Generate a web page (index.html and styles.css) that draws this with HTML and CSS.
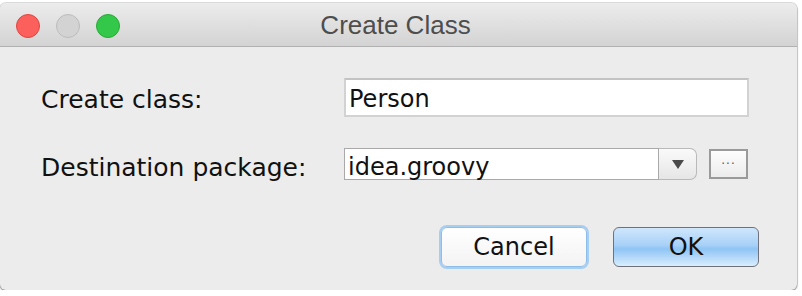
FILE: index.html
```html
<!doctype html>
<html lang="en">
  <head>
    <meta charset="UTF-8" />
    <title>Create Class</title>
    <link rel="stylesheet" href="styles.css">
  </head>
  <body>
    <div class="window">
      <div class="titlebar">
        <div class="lights">
          <span class="light close"></span>
          <span class="light minimize"></span>
          <span class="light zoom"></span>
        </div>
        <div class="title">Create Class</div>
      </div>
      <div class="dialog">
        <div class="form">
          <label class="label">Create class:</label>
          <div class="field">Person</div>
          <label class="label second">Destination package:</label>
          <div class="package">
            <div class="combo">
              <div class="combo-text">idea.groovy</div>
              <div class="combo-arrow">
                <svg width="12" height="9" viewBox="0 0 12 9"><path d="M0 0 L12 0 L6 9 Z" fill="#4a4a4a"/></svg>
              </div>
            </div>
            <div class="browse">&middot;&middot;&middot;</div>
          </div>
        </div>
        <div class="buttons">
          <button class="btn cancel">Cancel</button>
          <button class="btn ok">OK</button>
        </div>
      </div>
    </div>
  </body>
</html>
```

FILE: styles.css
```css
* {
  box-sizing: border-box;
}
body {
  margin: 0;
  background: #ffffff;
  font-family: "DejaVu Sans", "Liberation Sans", sans-serif;
  color: #111;
}
.window {
  width: 797px;
  height: 287px;
  margin-top: 3px;
  border-radius: 6px;
  background: #ececec;
  overflow: hidden;
  box-shadow: 0 1px 2px rgba(0, 0, 0, 0.45), 0 0 0 1px rgba(0, 0, 0, 0.12);
  display: flex;
  flex-direction: column;
}
.titlebar {
  height: 44px;
  flex: none;
  position: relative;
  display: flex;
  align-items: center;
  justify-content: center;
  background: linear-gradient(#ececec, #d3d3d3);
  border-bottom: 1px solid #b1b1b1;
}
.lights {
  position: absolute;
  left: 16px;
  top: 11px;
  display: flex;
  gap: 16px;
}
.light {
  width: 24px;
  height: 24px;
  border-radius: 50%;
}
.close {
  background: #fc605c;
  border: 1px solid #e0443e;
}
.minimize {
  background: #d3d3d3;
  border: 1px solid #bcbcbc;
}
.zoom {
  background: #34c84a;
  border: 1px solid #27aa35;
}
.title {
  font-family: "Liberation Sans", Arial, sans-serif;
  font-size: 26px;
  color: #4d4d4d;
  margin: 2px 0 0 -6px;
}
.dialog {
  flex: 1;
  display: flex;
  flex-direction: column;
  padding: 31px 38px 0 41px;
}
.form {
  display: grid;
  grid-template-columns: 303px 405px;
  grid-template-rows: 39px 32px;
  row-gap: 31px;
  align-items: center;
}
.label {
  font-size: 25px;
  line-height: 30px;
  padding-top: 5px;
}
.label.second {
  padding-top: 8px;
}
.field {
  height: 39px;
  background: #fff;
  border: 2px solid #d2d2d2;
  border-top-color: #c3c3c3;
  font-size: 24px;
  line-height: 35px;
  padding: 2px 0 0 3px;
}
.package {
  display: flex;
  align-items: center;
  gap: 12px;
}
.combo {
  display: flex;
  height: 32px;
}
.combo-text {
  width: 315px;
  background: #fff;
  border: 1px solid #a9a9a9;
  font-size: 24px;
  line-height: 30px;
  padding: 3px 0 0 3px;
}
.combo-arrow {
  width: 38px;
  border: 1px solid #b9b9b9;
  border-left: none;
  border-radius: 0 7px 7px 0;
  background: linear-gradient(#fafafa, #e6e6e6);
  display: flex;
  align-items: center;
  justify-content: center;
}
.browse {
  width: 39px;
  height: 30px;
  border: 2px solid #9a9a9a;
  background: linear-gradient(#fdfdfd, #ececec);
  font-size: 12px;
  color: #555;
  display: flex;
  align-items: center;
  justify-content: center;
  letter-spacing: 1px;
}
.buttons {
  display: flex;
  justify-content: flex-end;
  gap: 26px;
  margin-top: 47px;
}
.btn {
  width: 146px;
  height: 40px;
  border-radius: 6px;
  font-family: "DejaVu Sans", sans-serif;
  font-size: 24px;
  color: #111;
  padding: 0;
}
.cancel {
  background: linear-gradient(#ffffff, #f3f3f3);
  border: 1px solid #8fbde9;
  box-shadow: 0 0 0 2px #a6cdf2;
}
.ok {
  background: linear-gradient(#cfe6fc 0%, #a7d1f7 45%, #8fc4f4 55%, #d8eefe 100%);
  border: 1px solid #70717a;
}
```
